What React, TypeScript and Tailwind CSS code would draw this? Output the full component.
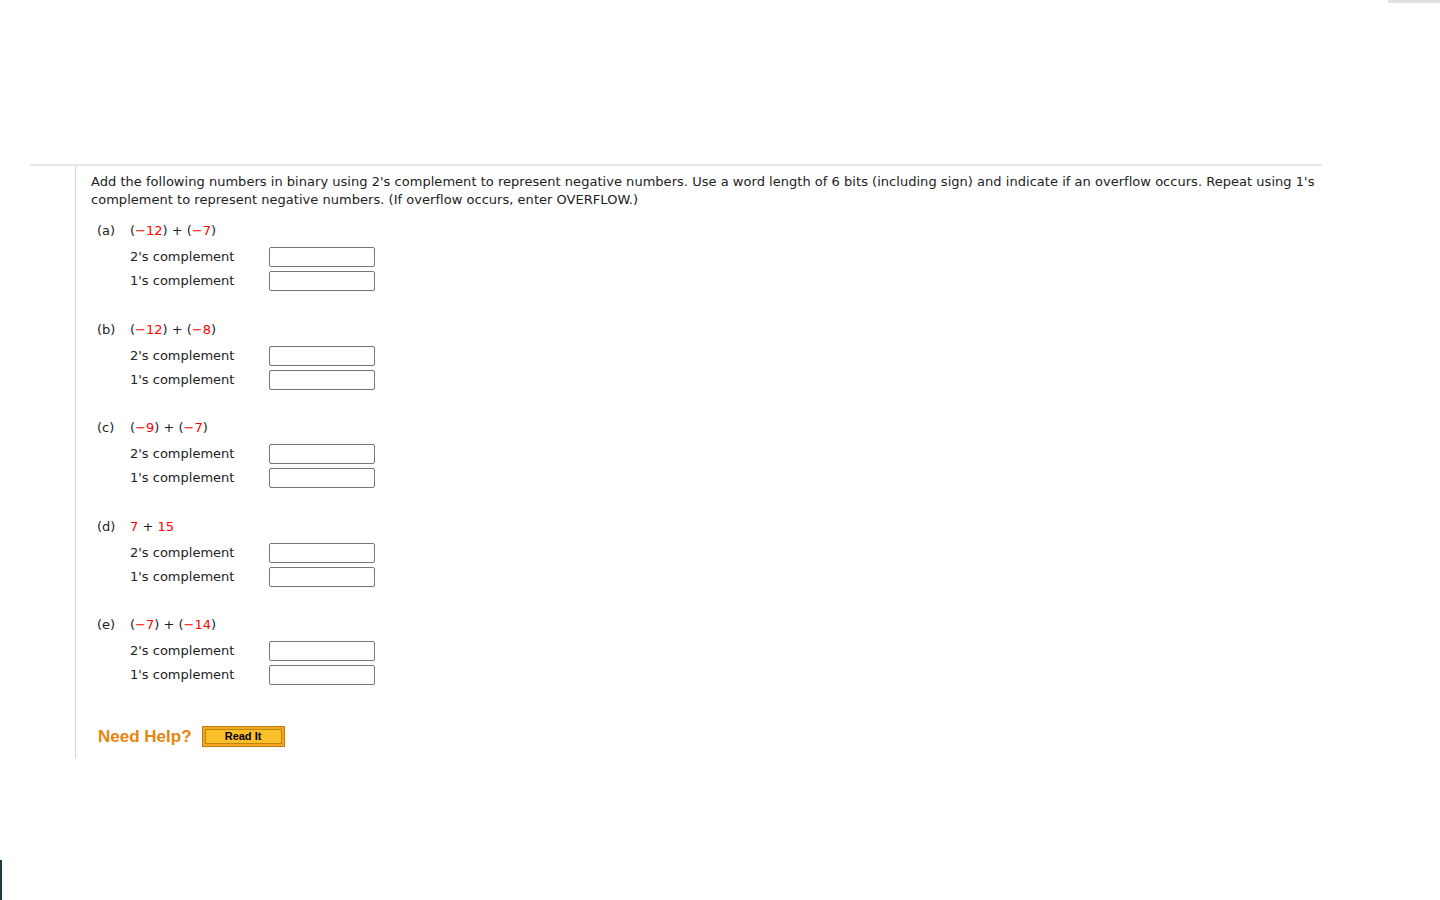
import React from 'react';

type Part = { label: string; expr: React.ReactNode };

const Neg = ({ n }: { n: string }) => (
    <>
        (<span className="text-[#ff0000]">−{n}</span>)
    </>
);

const parts: Part[] = [
    { label: '(a)', expr: <><Neg n="12" /> + <Neg n="7" /></> },
    { label: '(b)', expr: <><Neg n="12" /> + <Neg n="8" /></> },
    { label: '(c)', expr: <><Neg n="9" /> + <Neg n="7" /></> },
    { label: '(d)', expr: <><span className="text-[#ff0000]">7</span> + <span className="text-[#ff0000]">15</span></> },
    { label: '(e)', expr: <><Neg n="7" /> + <Neg n="14" /></> },
];

const AnswerRow = ({ text }: { text: string }) => (
    <div className="flex items-center h-6">
        <span className="w-[139px]">{text}</span>
        <input type="text" className="w-[106px] h-[20px] border border-[#767676] rounded-[2px] bg-white" />
    </div>
);

export default function App() {
    return (
        <div className="relative min-h-[900px] bg-white text-[13px] text-[#222] font-['DejaVu_Sans',Verdana,sans-serif]">
            {/* top-right tab strip */}
            <div className="absolute top-0 right-0 w-[52px] h-[3px] bg-[#dde0e4]" />
            {/* bottom-left edge */}
            <div className="absolute bottom-0 left-0 w-[2px] h-[40px] bg-[#1e3c44]" />

            <div className="pt-[164px] pl-[30px]">
                <div className="w-[1292px] border-t-2 border-[#e6e6e6] flex">
                    <div className="w-[45px] shrink-0" />
                    <div className="border-l border-[#d4d4d4] pl-[15px] pt-[7px] pb-[8px] flex-1">
                        <p className="leading-[18px] pr-[4px] tracking-[0.03px]">
                            Add the following numbers in binary using 2's complement to represent negative numbers. Use a word length of 6 bits (including sign) and indicate if an overflow occurs. Repeat using 1's complement to represent negative numbers. (If overflow occurs, enter OVERFLOW.)
                        </p>

                        <div className="mt-[12px] pl-[6px] flex flex-col gap-[26.5px]">
                            {parts.map((p) => (
                                <div key={p.label}>
                                    <div className="flex h-[20px] items-center">
                                        <span className="w-[33px]">{p.label}</span>
                                        <span>{p.expr}</span>
                                    </div>
                                    <div className="pl-[33px] mt-[4px]">
                                        <AnswerRow text="2's complement" />
                                        <AnswerRow text="1's complement" />
                                    </div>
                                </div>
                            ))}
                        </div>

                        <div className="mt-[37px] pl-[7px] flex items-center gap-[10px]">
                            <span className="font-['Liberation_Sans',Arial,sans-serif] font-bold text-[17px] text-[#e8850c]">Need Help?</span>
                            <button className="w-[83px] h-[21px] border border-[#c47a14] bg-[#f5a623] p-[2px]">
                                <span className="flex h-full w-full items-center justify-center border border-[#b8860b] bg-[#fbbf2a] font-['Liberation_Sans',Arial,sans-serif] font-bold text-[11px] text-black leading-none">
                                    Read It
                                </span>
                            </button>
                        </div>
                    </div>
                </div>
            </div>
        </div>
    );
}
